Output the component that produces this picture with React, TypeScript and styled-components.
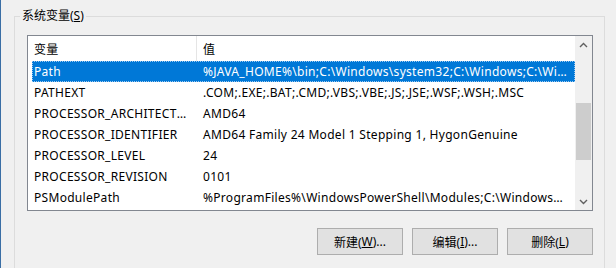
import React from "react";
import styled, { createGlobalStyle } from "styled-components";

const GlobalStyle = createGlobalStyle`
  html, body { margin: 0; padding: 0; background: #f0f0f0; }
  body {
    font-family: "Noto Sans", "Noto Sans CJK SC", sans-serif;
    font-size: 12px;
    color: #000;
  }
  * { box-sizing: border-box; }
`;

const Window = styled.div`
  width: 616px;
  height: 268px;
  overflow: hidden;
  background: #f0f0f0;
  border-left: 1px solid #3a6ea5;
  padding: 8px 11px 0 13px;
`;

const GroupBox = styled.fieldset`
  margin: 0;
  width: 591px;
  min-width: 0;
  min-inline-size: 0;
  min-height: 300px;
  border: 1px solid #dcdcdc;
  border-bottom: none;
  padding: 0 11px 0 12px;
`;

const Legend = styled.legend`
  margin-left: -7px;
  padding: 0 2px;
  height: 16px;
  line-height: 16px;
  font-size: 12px;
  white-space: nowrap;
`;

const ListBox = styled.div`
  margin-top: 11px;
  height: 176px;
  border: 1px solid #828790;
  background: #fff;
  display: flex;
`;

const ListContent = styled.div`
  flex: 1;
  min-width: 0;
  padding-left: 4px;
  display: flex;
  flex-direction: column;
  letter-spacing: 0.3px;
`;

const HeaderRow = styled.div`
  height: 25px;
  display: flex;
  align-items: stretch;
`;

const HeaderCell = styled.div<{ $first?: boolean }>`
  display: flex;
  align-items: center;
  padding-left: ${(p) => (p.$first ? "2px" : "6px")};
  width: ${(p) => (p.$first ? "165px" : "auto")};
  flex: ${(p) => (p.$first ? "none" : "1")};
  border-right: ${(p) => (p.$first ? "1px solid #e5e5e5" : "none")};
`;

const Row = styled.div<{ $selected?: boolean }>`
  height: 21px;
  display: flex;
  align-items: center;
  background: ${(p) => (p.$selected ? "#0078d7" : "transparent")};
  color: ${(p) => (p.$selected ? "#fff" : "#000")};
  outline: ${(p) => (p.$selected ? "1px dotted #9fcaf0" : "none")};
  outline-offset: -1px;
`;

const NameCell = styled.div`
  width: 165px;
  flex: none;
  padding-left: 2px;
  padding-right: 6px;
  white-space: nowrap;
  overflow: hidden;
  text-overflow: ellipsis;
`;

const ValueCell = styled.div`
  flex: 1;
  min-width: 0;
  padding-left: 6px;
  padding-right: 8px;
  white-space: nowrap;
  overflow: hidden;
  text-overflow: ellipsis;
`;

const ScrollBar = styled.div`
  width: 17px;
  flex: none;
  background: #f0f0f0;
  display: flex;
  flex-direction: column;
`;

const ScrollArrow = styled.div`
  height: 17px;
  display: flex;
  align-items: center;
  justify-content: center;
`;

const ScrollTrack = styled.div`
  flex: 1;
  display: flex;
  flex-direction: column;
  padding: 0 1px;
`;

const Thumb = styled.div<{ $offset: number; $size: number }>`
  margin-top: ${(p) => p.$offset}px;
  height: ${(p) => p.$size}px;
  background: #cdcdcd;
`;

const ButtonRow = styled.div`
  display: flex;
  justify-content: flex-end;
  gap: 9px;
  margin-top: 17px;
`;

const Button = styled.button`
  width: 86px;
  height: 27px;
  background: #e1e1e1;
  border: 1px solid #adadad;
  border-radius: 0;
  font-family: "Noto Sans", "Noto Sans CJK SC", sans-serif;
  font-size: 12px;
  color: #000;
  padding: 0;
  display: flex;
  align-items: center;
  justify-content: center;
`;

const Chevron = ({ up }: { up?: boolean }) => (
  <svg width="9" height="6" viewBox="0 0 9 6">
    <path
      d={up ? "M1 5 L4.5 1.5 L8 5" : "M1 1 L4.5 4.5 L8 1"}
      fill="none"
      stroke="#606060"
      strokeWidth="1.4"
    />
  </svg>
);

const rows: [string, string][] = [
  [
    "Path",
    "%JAVA_HOME%\\bin;C:\\Windows\\system32;C:\\Windows;C:\\Windows\\System32\\Wbem;C:\\Windows\\System32\\WindowsPowerShell\\v1.0\\",
  ],
  ["PATHEXT", ".COM;.EXE;.BAT;.CMD;.VBS;.VBE;.JS;.JSE;.WSF;.WSH;.MSC"],
  ["PROCESSOR_ARCHITECTURE", "AMD64"],
  ["PROCESSOR_IDENTIFIER", "AMD64 Family 24 Model 1 Stepping 1, HygonGenuine"],
  ["PROCESSOR_LEVEL", "24"],
  ["PROCESSOR_REVISION", "0101"],
  [
    "PSModulePath",
    "%ProgramFiles%\\WindowsPowerShell\\Modules;C:\\Windows\\system32\\WindowsPowerShell\\v1.0\\Modules",
  ],
];

export default function App() {
  return (
    <>
      <GlobalStyle />
      <Window>
        <GroupBox>
          <Legend>
            系统变量(<u>S</u>)
          </Legend>
          <ListBox>
            <ListContent>
              <HeaderRow>
                <HeaderCell $first>变量</HeaderCell>
                <HeaderCell>值</HeaderCell>
              </HeaderRow>
              {rows.map(([name, value], i) => (
                <Row key={name} $selected={i === 0}>
                  <NameCell>{name}</NameCell>
                  <ValueCell>{value}</ValueCell>
                </Row>
              ))}
            </ListContent>
            <ScrollBar>
              <ScrollArrow>
                <Chevron up />
              </ScrollArrow>
              <ScrollTrack>
                <Thumb $offset={50} $size={57} />
              </ScrollTrack>
              <ScrollArrow>
                <Chevron />
              </ScrollArrow>
            </ScrollBar>
          </ListBox>
          <ButtonRow>
            <Button>
              新建(<u>W</u>)...
            </Button>
            <Button>
              编辑(<u>I</u>)...
            </Button>
            <Button>
              删除(<u>L</u>)
            </Button>
          </ButtonRow>
        </GroupBox>
      </Window>
    </>
  );
}
